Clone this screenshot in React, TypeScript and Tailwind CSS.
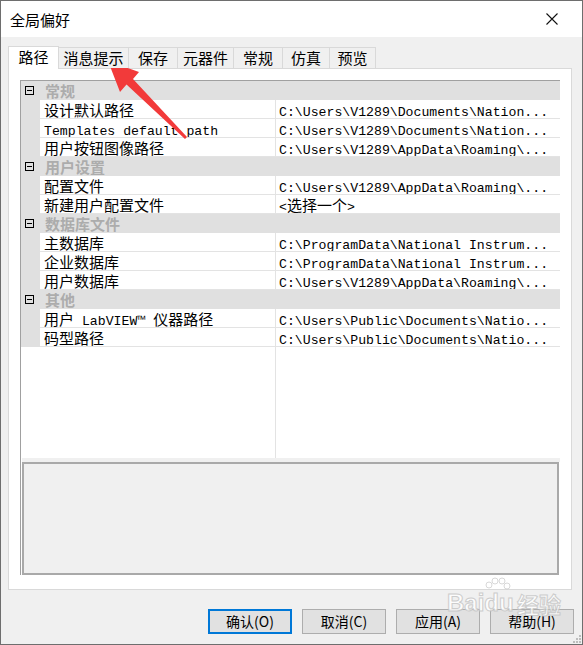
import React from 'react';

type Row = { cat?: string; name?: string; value?: string };

const rows: Row[] = [
    { cat: '常规' },
    { name: '设计默认路径', value: 'C:\\Users\\V1289\\Documents\\Nation...' },
    { name: 'Templates default path', value: 'C:\\Users\\V1289\\Documents\\Nation...' },
    { name: '用户按钮图像路径', value: 'C:\\Users\\V1289\\AppData\\Roaming\\...' },
    { cat: '用户设置' },
    { name: '配置文件', value: 'C:\\Users\\V1289\\AppData\\Roaming\\...' },
    { name: '新建用户配置文件', value: '<选择一个>' },
    { cat: '数据库文件' },
    { name: '主数据库', value: 'C:\\ProgramData\\National Instrum...' },
    { name: '企业数据库', value: 'C:\\ProgramData\\National Instrum...' },
    { name: '用户数据库', value: 'C:\\Users\\V1289\\AppData\\Roaming\\...' },
    { cat: '其他' },
    { name: '用户 LabVIEW™ 仪器路径', value: 'C:\\Users\\Public\\Documents\\Natio...' },
    { name: '码型路径', value: 'C:\\Users\\Public\\Documents\\Natio...' },
];

const tabs = [
    { label: '消息提示', w: 'w-[70px]' },
    { label: '保存', w: 'w-[49px]' },
    { label: '元器件', w: 'w-[56px]' },
    { label: '常规', w: 'w-[49px]' },
    { label: '仿真', w: 'w-[47px]' },
    { label: '预览', w: 'w-[46px]' },
];

const CJK = /([\u2e80-\u9fff\u3000-\u303f\uff00-\uffef]+)/;

// SimSun-like look: half-width latin 8px, CJK 15px
const Mixed: React.FC<{ text: string }> = ({ text }) => (
    <>
        {text.split(CJK).map((part, i) =>
            part === '' ? null : CJK.test(part) ? (
                <span key={i} className="font-['Noto_Sans_CJK_SC',sans-serif] text-[15px]">
                    {part}
                </span>
            ) : (
                <span key={i} className="font-['Liberation_Mono',monospace] text-[13.2px]">
                    {part}
                </span>
            )
        )}
    </>
);

const MinusBox: React.FC = () => (
    <div className="w-[9px] h-[9px] border border-black flex items-center justify-center">
        <div className="w-[5px] h-px bg-black" />
    </div>
);

const App: React.FC = () => {
    return (
        <div className="relative w-[583px] h-[645px] bg-[#f0f0f0] border border-[#6e6e6e] flex flex-col font-['Noto_Sans_CJK_SC',sans-serif] text-black overflow-hidden">
            {/* title bar */}
            <div className="h-[36px] bg-white flex items-center justify-between shrink-0">
                <span className="pl-[9px] text-[15px] leading-none">全局偏好</span>
                <div className="w-[46px] h-full flex items-center justify-center mr-[7px]">
                    <svg width="12" height="12" viewBox="0 0 12 12">
                        <path d="M0.5 0.5 L11.5 11.5 M11.5 0.5 L0.5 11.5" stroke="#111" strokeWidth="1.1" />
                    </svg>
                </div>
            </div>

            {/* tabs */}
            <div className="flex items-end ml-[7px] mt-[9px] h-[23px] relative z-10">
                <div className="w-[51px] h-[23px] bg-white border-l border-t border-r border-[#d9d9d9] flex items-center justify-center text-[15px] pb-[2px]">
                    路径
                </div>
                {tabs.map((t) => (
                    <div
                        key={t.label}
                        className={`${t.w} h-[21px] mb-px bg-[#f0f0f0] border-t border-r border-[#d9d9d9] flex items-center justify-center text-[15px]`}
                    >
                        {t.label}
                    </div>
                ))}
            </div>

            {/* panel */}
            <div className="ml-[7px] -mt-px w-[564px] h-[522px] bg-white border border-[#d9d9d9] pl-[11px] pt-[11px]">
                <div className="w-[540px] h-[495px] border-l border-t border-[#a0a0a0] flex flex-col">
                    <div className="h-[377px] flex flex-col bg-white">
                        {rows.map((r, i) =>
                            r.cat ? (
                                <div key={i} className="h-[19px] bg-[#e0e0e0] flex items-center shrink-0">
                                    <div className="ml-[4px]">
                                        <MinusBox />
                                    </div>
                                    <span className="ml-[11px] text-[15px] font-bold text-[#acacac] leading-[19px]">{r.cat}</span>
                                </div>
                            ) : (
                                <div key={i} className="h-[19px] flex shrink-0 leading-[18px]">
                                    <div className="w-[19px] bg-[#e0e0e0]" />
                                    <div className="w-[236px] pl-[4px] border-b border-r border-[#e3e3e3] whitespace-pre overflow-hidden">
                                        <Mixed text={r.name!} />
                                    </div>
                                    <div className="flex-1 pl-[3px] border-b border-[#e3e3e3] whitespace-pre overflow-hidden">
                                        <Mixed text={r.value!} />
                                    </div>
                                </div>
                            )
                        )}
                        <div className="flex-1 flex">
                            <div className="w-[19px]" />
                            <div className="w-[236px] border-r border-[#e3e3e3]" />
                            <div className="flex-1" />
                        </div>
                    </div>
                    <div className="h-[4px] ml-px bg-[#f0f0f0] w-[538px]" />
                    <div className="ml-px w-[537px] h-[113px] bg-[#f0f0f0] border-2 border-[#a9a9a9]" />
                </div>
            </div>

            {/* buttons */}
            <div className="flex justify-end gap-[10px] pr-[8px] mt-[19px]">
                <button className="w-[84px] h-[25px] bg-[#e1e1e1] border-2 border-[#0078d7] text-[14px] flex items-center justify-center">
                    确认(O)
                </button>
                <button className="w-[84px] h-[25px] bg-[#e1e1e1] border border-[#adadad] text-[14px] flex items-center justify-center">
                    取消(C)
                </button>
                <button className="w-[84px] h-[25px] bg-[#e1e1e1] border border-[#adadad] text-[14px] flex items-center justify-center">
                    应用(A)
                </button>
                <button className="w-[84px] h-[25px] bg-[#e1e1e1] border border-[#adadad] text-[14px] flex items-center justify-center">
                    帮助(H)
                </button>
            </div>

            {/* resize grip */}
            <svg className="absolute right-[1px] bottom-[1px]" width="10" height="10" viewBox="0 0 10 10">
                <rect x="8" y="2" width="2" height="2" fill="#bdbdbd" />
                <rect x="5" y="5" width="2" height="2" fill="#bdbdbd" />
                <rect x="8" y="5" width="2" height="2" fill="#bdbdbd" />
                <rect x="2" y="8" width="2" height="2" fill="#bdbdbd" />
                <rect x="5" y="8" width="2" height="2" fill="#bdbdbd" />
                <rect x="8" y="8" width="2" height="2" fill="#bdbdbd" />
            </svg>

            {/* watermark */}
            <div className="absolute left-[446px] top-[576px] pointer-events-none opacity-80">
                <svg className="absolute left-[36px] top-0" width="28" height="20" viewBox="0 0 28 20">
                    <circle cx="6" cy="8" r="3" fill="#fff" stroke="#cfcfcf" />
                    <circle cx="12" cy="4" r="3" fill="#fff" stroke="#cfcfcf" />
                    <circle cx="19" cy="4" r="3" fill="#fff" stroke="#cfcfcf" />
                    <circle cx="24" cy="9" r="3" fill="#fff" stroke="#cfcfcf" />
                </svg>
                <span className="absolute left-0 top-[12px] whitespace-nowrap text-[24px] leading-[28px] font-bold font-['Liberation_Sans',sans-serif] text-white [-webkit-text-stroke:1px_#c4c4c4]">
                    Baidu
                </span>
                <span className="absolute left-[70px] top-[12px] whitespace-nowrap text-[22px] leading-[28px] font-bold text-white [-webkit-text-stroke:1px_#c4c4c4]">
                    经验
                </span>
            </div>

            {/* red annotation arrow */}
            <svg className="absolute left-[-1px] top-[-1px] pointer-events-none" width="583" height="645">
                <polygon
                    points="108,61 139,72 133,79 187,137 185,139 126.5,84.5 120,92"
                    fill="#f23a3a"
                />
            </svg>
        </div>
    );
};

export default App;
